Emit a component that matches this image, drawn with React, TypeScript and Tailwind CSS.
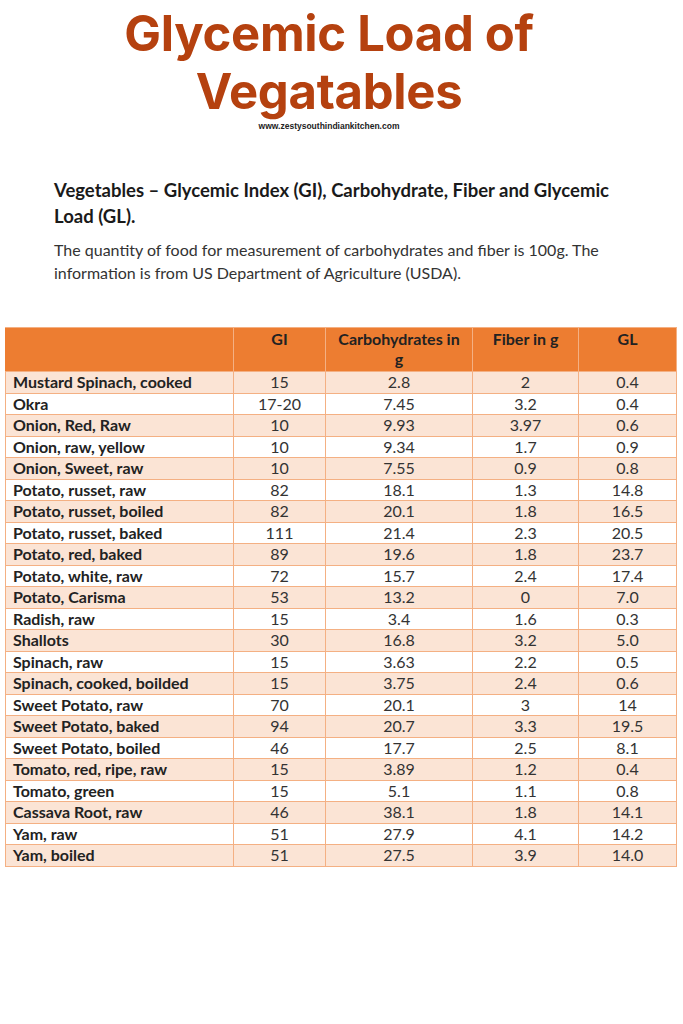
const rows: [string, string, string, string, string][] = [
  ['Mustard Spinach, cooked', '15', '2.8', '2', '0.4'],
  ['Okra', '17-20', '7.45', '3.2', '0.4'],
  ['Onion, Red, Raw', '10', '9.93', '3.97', '0.6'],
  ['Onion, raw, yellow', '10', '9.34', '1.7', '0.9'],
  ['Onion, Sweet, raw', '10', '7.55', '0.9', '0.8'],
  ['Potato, russet, raw', '82', '18.1', '1.3', '14.8'],
  ['Potato, russet, boiled', '82', '20.1', '1.8', '16.5'],
  ['Potato, russet, baked', '111', '21.4', '2.3', '20.5'],
  ['Potato, red, baked', '89', '19.6', '1.8', '23.7'],
  ['Potato, white, raw', '72', '15.7', '2.4', '17.4'],
  ['Potato, Carisma', '53', '13.2', '0', '7.0'],
  ['Radish, raw', '15', '3.4', '1.6', '0.3'],
  ['Shallots', '30', '16.8', '3.2', '5.0'],
  ['Spinach, raw', '15', '3.63', '2.2', '0.5'],
  ['Spinach, cooked, boilded', '15', '3.75', '2.4', '0.6'],
  ['Sweet Potato, raw', '70', '20.1', '3', '14'],
  ['Sweet Potato, baked', '94', '20.7', '3.3', '19.5'],
  ['Sweet Potato, boiled', '46', '17.7', '2.5', '8.1'],
  ['Tomato, red, ripe, raw', '15', '3.89', '1.2', '0.4'],
  ['Tomato, green', '15', '5.1', '1.1', '0.8'],
  ['Cassava Root, raw', '46', '38.1', '1.8', '14.1'],
  ['Yam, raw', '51', '27.9', '4.1', '14.2'],
  ['Yam, boiled', '51', '27.5', '3.9', '14.0'],
];

export default function App() {
  return (
    <div className="min-h-screen w-[683px] bg-white font-['Lato',sans-serif]">
      {/* Title */}
      <div className="pt-[5px] pr-[25px] text-center">
        <h1 className="font-['Inter',sans-serif] text-[49px] font-bold leading-[58px] tracking-[-0.3px] text-[#b5410f]">
          Glycemic Load of
          <br />
          Vegatables
        </h1>
        <p className="font-['Liberation_Sans',sans-serif] text-[8.5px] font-bold leading-[10px] text-[#222]">
          www.zestysouthindiankitchen.com
        </p>
      </div>

      {/* Intro */}
      <div className="mt-[46px] px-[54px]">
        <h2 className="text-[18.5px] font-bold leading-[26px] text-[#1a1a1a]">
          Vegetables – Glycemic Index (GI), Carbohydrate, Fiber and Glycemic Load (GL).
        </h2>
        <p className="mt-[9px] text-[16px] leading-[23px] text-[#333]">
          The quantity of food for measurement of carbohydrates and fiber is 100g. The information is from US
          Department of Agriculture (USDA).
        </p>
      </div>

      {/* Table */}
      <div className="mt-[43px] px-[5px]">
        <table className="w-[671px] table-fixed border-collapse text-[16px] text-[#222]">
          <colgroup>
            <col className="w-[228px]" />
            <col className="w-[92px]" />
            <col className="w-[147px]" />
            <col className="w-[106px]" />
            <col className="w-[98px]" />
          </colgroup>
          <thead>
            <tr className="h-[44px] bg-[#ed7d31]">
              <th className="border border-[#f4b083] border-l-[#ed7d31]"></th>
              <th className="border border-[#f4b083] pt-[1px] align-top font-bold leading-[20px]">GI</th>
              <th className="border border-[#f4b083] pt-[1px] align-top font-bold leading-[20px]">
                Carbohydrates in
                <br />g
              </th>
              <th className="border border-[#f4b083] pt-[1px] align-top font-bold leading-[20px]">Fiber in g</th>
              <th className="border border-[#f4b083] pt-[1px] align-top font-bold leading-[20px]">GL</th>
            </tr>
          </thead>
          <tbody>
            {rows.map((r, i) => (
              <tr key={r[0]} className={`h-[21.5px] ${i % 2 === 0 ? 'bg-[#fbe4d5]' : 'bg-white'}`}>
                <td className="border border-[#f4b083] pl-[7px] font-bold leading-[20px]">{r[0]}</td>
                <td className="border border-[#f4b083] text-center leading-[20px] text-[#333]">{r[1]}</td>
                <td className="border border-[#f4b083] text-center leading-[20px] text-[#333]">{r[2]}</td>
                <td className="border border-[#f4b083] text-center leading-[20px] text-[#333]">{r[3]}</td>
                <td className="border border-[#f4b083] text-center leading-[20px] text-[#333]">{r[4]}</td>
              </tr>
            ))}
          </tbody>
        </table>
      </div>
    </div>
  );
}
